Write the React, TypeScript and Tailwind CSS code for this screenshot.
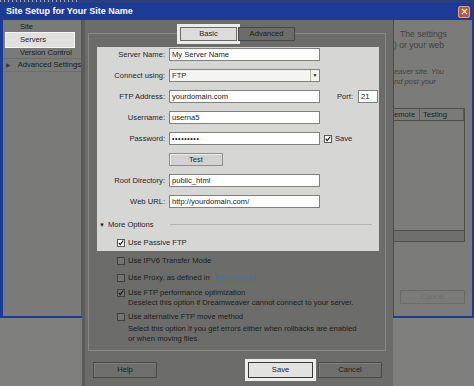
import React from "react";

const Tick = () => (
  <svg viewBox="0 0 8 8" className="h-[8px] w-[8px]">
    <polyline points="1,3.8 3,6.2 7,0.8" fill="none" stroke="#111" strokeWidth="1.4" />
  </svg>
);

const Box = ({ checked, dim }: { checked?: boolean; dim?: boolean }) => (
  <span
    className={
      dim
        ? "flex h-[8px] w-[8px] shrink-0 items-center justify-center border border-[#40413e] bg-[#747572]"
        : "flex h-[8px] w-[8px] shrink-0 items-center justify-center border border-[#5a5a58] bg-white"
    }
  >
    {checked ? <Tick /> : null}
  </span>
);

const Input = ({ children, w = "w-[151px]" }: { children?: React.ReactNode; w?: string }) => (
  <div className={`flex h-[13px] ${w} shrink-0 items-center border border-[#80817e] bg-white px-[2px] text-[#1a1a1a]`}>
    {children}
  </div>
);

const Row = ({ label, children }: { label: string; children: React.ReactNode }) => (
  <div className="flex h-[13px] items-center">
    <div className="w-[68px] shrink-0 text-right">{label}</div>
    <div className="ml-[4px] flex flex-1 items-center">{children}</div>
  </div>
);

export default function App() {
  return (
    <div className="relative h-[386px] w-[474px] overflow-hidden bg-[#7f807d] font-['Liberation_Sans',Arial,sans-serif] text-[7.6px] leading-none text-[#1c1c1c]">
      {/* Outer window */}
      <div className="flex h-[318px] flex-col">
        <div className="h-[3px] bg-[#2b3f7a]">
          <div className="h-[2px] w-[80px] bg-[repeating-linear-gradient(90deg,#9aa5c6_0px,#9aa5c6_1px,transparent_1px,transparent_4px)]" />
        </div>
        <div className="flex h-[17px] items-center justify-between bg-[#1c3b96] pl-[6px] pr-[4px]">
          <span className="text-[9px] font-bold text-white">Site Setup for Your Site Name</span>
          <span className="flex h-[12px] w-[12px] items-center justify-center rounded-[2px] border border-[#d9a38c] bg-[#c4552f]">
            <svg viewBox="0 0 8 8" className="h-[7px] w-[7px]">
              <path d="M1 1L7 7M7 1L1 7" stroke="#fff" strokeWidth="1.5" />
            </svg>
          </span>
        </div>
        <div className="flex flex-1 border-b-[2px] border-l-[3px] border-r-[2px] border-[#1c3b96]">
          {/* Sidebar */}
          <div className="flex w-[79px] shrink-0 flex-col overflow-hidden whitespace-nowrap border-r border-[#585956] bg-[#7a7b78]">
            <div className="flex h-[12px] items-center pl-[17px] pt-[1px]">Site</div>
            <div className="flex h-[16px] items-center">
              <div className="ml-[2px] flex h-[16px] w-[70px] items-center bg-[#e0e0de] pl-[15px] shadow-[inset_0_0_0_1px_#f6f6f4]">
                Servers
              </div>
            </div>
            <div className="flex h-[11px] items-center border-b border-[#6d6e6b] pl-[17px]">Version Control</div>
            <div className="flex h-[13px] items-center border-b border-[#6d6e6b]">
              <span className="ml-[3px] w-[14px] text-[6px] text-[#3a3b38]">▶</span>
              <span>Advanced Settings</span>
            </div>
          </div>
          <div className="flex-1 bg-[#7b7c79]" />
          {/* Right column */}
          <div className="flex w-[79px] shrink-0 flex-col overflow-hidden whitespace-nowrap border-l border-[#4a4b48] bg-[#7b7c79] text-[#40413e]">
            <div className="mt-[9px] flex h-[10px] items-center pl-[6px] text-[8.6px]">The settings</div>
            <div className="mt-[1px] flex h-[10px] items-center pl-[0px] text-[8.6px]">) or your web</div>
            <div className="mt-[17px] flex h-[10px] items-center text-[7.6px] italic">eaver site. You</div>
            <div className="flex h-[10px] items-center text-[7.6px] italic">nd post your</div>
            <div className="mt-[21px] flex w-[71px] flex-col border-r border-[#4e4f4c]">
              <div className="flex h-[13px] items-center border-y border-[#4e4f4c] bg-[#7a7b78] text-[#222]">
                <div className="flex h-full w-[26px] items-center border-r border-[#5a5b58]">emote</div>
                <div className="flex h-full flex-1 items-center border-r border-[#5a5b58] pl-[3px]">Testing</div>
              </div>
              <div className="h-[109px] bg-[#7c7d7a]" />
              <div className="h-[12px] border-y border-[#4e4f4c] bg-[#6f706d]" />
            </div>
            <div className="ml-[6px] mt-[48px] flex h-[14px] w-[65px] items-center justify-center border border-[#6a6b68] text-[#6b6c69]">
              Cancel
            </div>
          </div>
        </div>
      </div>

      {/* Inner dialog */}
      <div className="absolute left-[82px] top-[20px] flex h-[366px] w-[311px] flex-col border-l-[3px] border-[#5b5c59] bg-[#6c6d6a] pt-[7px]">
        <div className="relative z-10 flex h-[14px] pl-[95px]">
          <div className="flex h-[14px] w-[57px] items-center justify-center border border-[#6a6a68] bg-[#dcdcda] shadow-[0_0_0_3px_#ececea]">
            Basic
          </div>
          <div className="ml-[1px] flex h-[14px] w-[57px] items-center justify-center border border-[#464744] bg-[#6c6d6a]">
            Advanced
          </div>
        </div>
        <div className="-mt-[8px] ml-[3px] mr-[7px] flex h-[318px] flex-col border border-[#898a87]">
          {/* light panel */}
          <div className="ml-[8px] mt-[13px] flex h-[204px] w-[282px] flex-col bg-[#d6d7d4] pt-[1px] text-[#1e1e1e]">
            <div className="flex flex-col gap-[8px]">
              <Row label="Server Name:">
                <Input>My Server Name</Input>
              </Row>
              <Row label="Connect using:">
                <div className="flex h-[13px] w-[151px] items-center border border-[#80817e] bg-[#f4f4f3]">
                  <span className="flex-1 pl-[2px]">FTP</span>
                  <span className="flex h-full w-[9px] items-center justify-center border-l border-[#b5b6b3] text-[5px]">▼</span>
                </div>
              </Row>
              <Row label="FTP Address:">
                <Input>yourdomain.com</Input>
                <span className="ml-[17px]">Port:</span>
                <div className="ml-auto mr-[1px]">
                  <Input w="w-[20px]">21</Input>
                </div>
              </Row>
              <Row label="Username:">
                <Input>userna5</Input>
              </Row>
              <Row label="Password:">
                <Input>
                  <span className="text-[7px] tracking-[0.6px]">•••••••••</span>
                </Input>
                <span className="ml-[4px]">
                  <Box checked />
                </span>
                <span className="ml-[3px]">Save</span>
              </Row>
              <Row label="">
                <div className="flex h-[13px] w-[54px] items-center justify-center border border-[#8e8f8c] bg-[#d2d3d0] shadow-[inset_1px_1px_0_#ececea]">
                  Test
                </div>
              </Row>
              <Row label="Root Directory:">
                <Input>public_html</Input>
              </Row>
              <Row label="Web URL:">
                <Input>http://yourdomain.com/</Input>
              </Row>
            </div>
            <div className="mt-[12px] flex h-[10px] items-center pl-[2px]">
              <span className="w-[9px] text-[6px]">▼</span>
              <span>More Options</span>
              <div className="ml-[16px] mr-[7px] h-[2px] flex-1 border-t border-[#b4b5b2] border-b-white" />
            </div>
            <div className="mt-[8px] flex h-[10px] items-center pl-[20px]">
              <Box checked />
              <span className="ml-[3px]">Use Passive FTP</span>
            </div>
          </div>
          {/* dim options */}
          <div className="flex flex-col pl-[28px] text-[#1c1c1c]">
            <div className="mt-[5px] flex h-[10px] items-center">
              <Box dim />
              <span className="ml-[3px]">Use IPV6 Transfer Mode</span>
            </div>
            <div className="mt-[7px] flex h-[10px] items-center">
              <Box dim />
              <span className="ml-[3px]">Use Proxy, as defined in</span>
              <span className="ml-[5px] text-[#46709e] underline decoration-[#46709e]">Preferences</span>
            </div>
            <div className="mt-[5px] flex h-[10px] items-center">
              <Box dim checked />
              <span className="ml-[3px]">Use FTP performance optimization</span>
            </div>
            <div className="flex h-[10px] items-center pl-[11px]">
              Deselect this option if Dreamweaver cannot connect to your server.
            </div>
            <div className="mt-[4px] flex h-[10px] items-center">
              <Box dim />
              <span className="ml-[3px]">Use alternative FTP move method</span>
            </div>
            <div className="mt-[2px] flex h-[10px] items-center pl-[11px]">
              Select this option if you get errors either when rollbacks are enabled
            </div>
            <div className="flex h-[10px] items-center pl-[11px]">or when moving files.</div>
          </div>
        </div>
        {/* buttons */}
        <div className="mt-[11px] flex h-[16px] items-center">
          <div className="ml-[8px] flex h-[16px] w-[64px] items-center justify-center border border-[#4a4b48] bg-[#6e6f6c] shadow-[inset_1px_1px_0_#80817e]">
            Help
          </div>
          <div className="ml-auto flex h-[16px] w-[65px] items-center justify-center border border-[#3a3a3a] bg-[#e2e2e0] shadow-[0_0_0_3px_#ececea]">
            Save
          </div>
          <div className="ml-[5px] mr-[11px] flex h-[16px] w-[64px] items-center justify-center border border-[#4a4b48] bg-[#6e6f6c] shadow-[inset_1px_1px_0_#80817e]">
            Cancel
          </div>
        </div>
      </div>
    </div>
  );
}
